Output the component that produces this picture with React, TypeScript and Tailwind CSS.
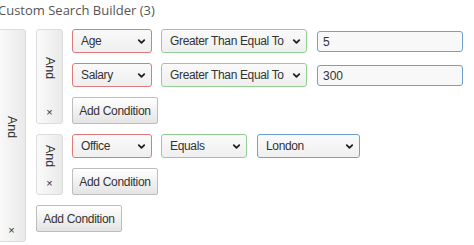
import React from "react";
import { ChevronDown } from "lucide-react";

type Tone = "red" | "green" | "blue";

const toneBorder: Record<Tone, string> = {
  red: "border-[#e07a7a]",
  green: "border-[#93cf93]",
  blue: "border-[#6fa0d0]",
};

const Select: React.FC<{ label: string; tone: Tone; width: string }> = ({ label, tone, width }) => (
  <div
    className={`flex h-[24px] items-center justify-between rounded-[3px] border bg-gradient-to-b from-[#fafafa] to-[#efefef] pl-[8px] pr-[4px] text-[12px] tracking-[-0.35px] whitespace-nowrap text-[#333] ${toneBorder[tone]} ${width}`}
  >
    <span>{label}</span>
    <ChevronDown size={11} strokeWidth={4} className="shrink-0 text-[#222]" />
  </div>
);

const ValueInput: React.FC<{ value: string }> = ({ value }) => (
  <div className="mt-[2px] flex h-[21px] w-[146px] items-center rounded-[3px] border border-[#6fa0d0] bg-[#f8f8f8] pl-[5px] text-[12px] text-[#333]">
    {value}
  </div>
);

const AddCondition: React.FC = () => (
  <div className="flex h-[27px] w-[86px] items-center justify-center rounded-[2px] border border-[#bdbdbd] bg-gradient-to-b from-[#ffffff] to-[#e4e4e4] text-[12px] tracking-[-0.3px] text-[#333]">
    Add Condition
  </div>
);

const LogicButton: React.FC<{ className?: string }> = ({ className = "" }) => (
  <div
    className={`flex flex-col items-center self-stretch rounded-[3px] border border-[#dcdcdc] bg-gradient-to-r from-[#fafafa] to-[#eaeaea] text-[#333] ${className}`}
  >
    <div className="flex flex-1 items-center justify-center">
      <span className="text-[12.5px] [writing-mode:vertical-rl]">And</span>
    </div>
    <div className="flex h-[16px] items-start justify-center text-[11px] leading-none">×</div>
  </div>
);

type Row = { field: string; op: string; opWidth: string; value: string; valueIsSelect?: boolean };

const Group: React.FC<{ rows: Row[] }> = ({ rows }) => (
  <div className="flex gap-[9px]">
    <LogicButton className="w-[27px]" />
    <div className="flex flex-col gap-[10px]">
      {rows.map((r) => (
        <div key={r.field} className="flex gap-[9px]">
          <Select label={r.field} tone="red" width="w-[80px]" />
          <Select label={r.op} tone="green" width={r.opWidth} />
          <div className="ml-[1px]">
            {r.valueIsSelect ? (
              <Select label={r.value} tone="blue" width="w-[103px]" />
            ) : (
              <ValueInput value={r.value} />
            )}
          </div>
        </div>
      ))}
      <AddCondition />
    </div>
  </div>
);

export default function App() {
  return (
    <div className="h-[245px] w-[474px] overflow-hidden bg-white font-['Liberation_Sans',Arial,sans-serif]">
      <div className="ml-[-2px] flex h-[29px] items-start pt-[1px] font-['Open_Sans',sans-serif] text-[13px] text-[#555]">
        Custom Search Builder (3)
      </div>
      <div className="flex gap-[10px]">
        <LogicButton className="ml-[-3px] w-[29px]" />
        <div className="flex flex-col gap-[10px] pb-[10px]">
          <Group
            rows={[
              { field: "Age", op: "Greater Than Equal To", opWidth: "w-[146px]", value: "5" },
              { field: "Salary", op: "Greater Than Equal To", opWidth: "w-[146px]", value: "300" },
            ]}
          />
          <Group
            rows={[{ field: "Office", op: "Equals", opWidth: "w-[86px]", value: "London", valueIsSelect: true }]}
          />
          <AddCondition />
        </div>
      </div>
    </div>
  );
}
